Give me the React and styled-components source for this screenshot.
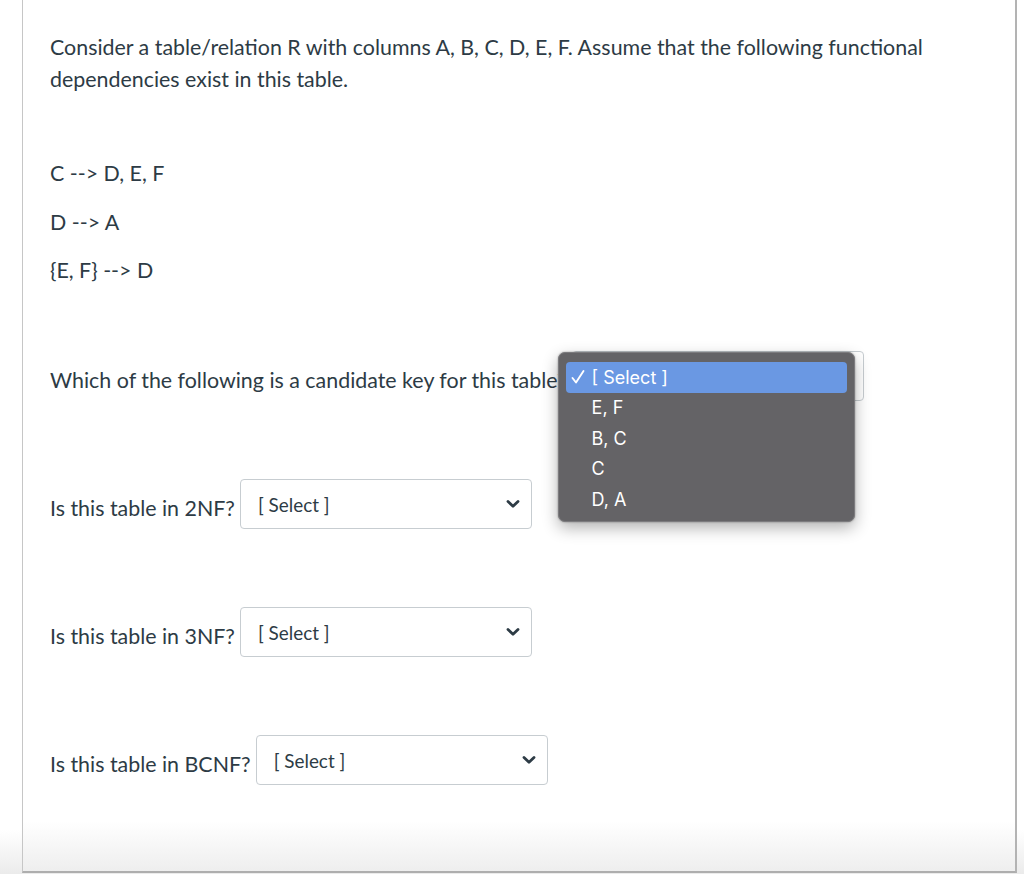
import React from "react";
import styled, { createGlobalStyle } from "styled-components";

const GlobalStyle = createGlobalStyle`
    html, body {
        margin: 0;
        padding: 0;
    }
    body {
        height: 874px;
        overflow: hidden;
        background: linear-gradient(to bottom, #ffffff 0, #ffffff 830px, #ebebeb 874px);
        font-family: Lato, "Noto Sans", sans-serif;
        color: #2d3b45;
    }
`

const Painel = styled.div`
    box-sizing: border-box;
    margin-left: 22px;
    width: 995px;
    height: 873px;
    border-left: 1px solid #c6c6c6;
    border-right: 2px solid #b3b3b3;
    border-bottom: 2px solid #aeaeae;
    background: linear-gradient(to bottom, #ffffff 0, #ffffff calc(100% - 50px), #eeeeee 100%);
    padding: 31px 27px 0 27px;
`

const Texto = styled.p`
    margin: 0;
    font-size: 21.4px;
    line-height: 32px;
    width: 900px;
`

const Dependencia = styled.p`
    margin: 0 0 ${props => props.espaco}px 0;
    font-size: 21.4px;
    line-height: 32px;
`

const ListaDependencias = styled.div`
    margin-top: 62px;
`

const Linha = styled.div`
    display: flex;
    align-items: center;
    margin-top: ${props => props.topo}px;
`

const Rotulo = styled.span`
    font-size: 21.4px;
    line-height: 32px;
    margin-top: 7px;
    margin-right: 5px;
    white-space: nowrap;
`

const CaixaSelect = styled.div`
    position: relative;
    box-sizing: border-box;
    width: 292px;
    height: 50px;
    flex-shrink: 0;
    border: 1px solid #c7cdd1;
    border-radius: 4px;
    background: #fff;
    display: flex;
    align-items: center;
    justify-content: space-between;
    padding: 0 11px 0 17px;
    font-size: 18.9px;
    color: #2d3b45;
`

const Menu = styled.div`
    position: absolute;
    left: -15px;
    top: 0;
    width: 297px;
    box-sizing: border-box;
    padding: 9px 7px 6px 7px;
    background: #646366;
    border: 1px solid #7c7b7e;
    border-radius: 7px;
    box-shadow: 0 6px 16px rgba(0, 0, 0, 0.3), 0 0 2px rgba(0, 0, 0, 0.4);
    font-family: Inter, "Noto Sans", sans-serif;
    z-index: 2;
`

const Opcao = styled.div`
    height: 30.5px;
    display: flex;
    align-items: center;
    border-radius: 4px;
    font-size: 18px;
    color: #ffffff;
    background: ${props => props.ativo ? "#6a98e3" : "transparent"};
    padding-left: 26px;
    position: relative;
`

const Check = styled.span`
    position: absolute;
    left: 5px;
    top: 6px;
    display: flex;
`

const Chevron = () => (
    <svg width="14" height="10" viewBox="0 0 14 10">
        <path d="M2 2.5 L7 7.2 L12 2.5" fill="none" stroke="#2d3b45" strokeWidth="2.8" strokeLinecap="round" strokeLinejoin="round" />
    </svg>
)

const MarcaCheck = () => (
    <svg width="14" height="18" viewBox="0 0 14 18">
        <path d="M1.5 10 L5 14.5 L12.5 3" fill="none" stroke="#ffffff" strokeWidth="1.9" strokeLinecap="round" strokeLinejoin="round" />
    </svg>
)

const opcoes = ["[ Select ]", "E, F", "B, C", "C", "D, A"]

export default function App() {
    return (
        <>
            <GlobalStyle />
            <Painel>
                <Texto>
                    Consider a table/relation R with columns A, B, C, D, E, F. Assume that the following functional dependencies exist in this table.
                </Texto>

                <ListaDependencias>
                    <Dependencia espaco={17}>C --&gt; D, E, F</Dependencia>
                    <Dependencia espaco={16}>D --&gt; A</Dependencia>
                    <Dependencia espaco={0}>{"{E, F} --> D"}</Dependencia>
                </ListaDependencias>

                <Linha topo={65}>
                    <Rotulo>Which of the following is a candidate key for this table?</Rotulo>
                    <CaixaSelect>
                        <span>[ Select ]</span>
                        <Chevron />
                        <Menu>
                            {opcoes.map((op, i) => (
                                <Opcao key={op} ativo={i === 0}>
                                    {i === 0 && <Check><MarcaCheck /></Check>}
                                    {op}
                                </Opcao>
                            ))}
                        </Menu>
                    </CaixaSelect>
                </Linha>

                <Linha topo={78}>
                    <Rotulo>Is this table in 2NF?</Rotulo>
                    <CaixaSelect>
                        <span>[ Select ]</span>
                        <Chevron />
                    </CaixaSelect>
                </Linha>

                <Linha topo={78}>
                    <Rotulo>Is this table in 3NF?</Rotulo>
                    <CaixaSelect>
                        <span>[ Select ]</span>
                        <Chevron />
                    </CaixaSelect>
                </Linha>

                <Linha topo={78}>
                    <Rotulo>Is this table in BCNF?</Rotulo>
                    <CaixaSelect>
                        <span>[ Select ]</span>
                        <Chevron />
                    </CaixaSelect>
                </Linha>
            </Painel>
        </>
    )
}
